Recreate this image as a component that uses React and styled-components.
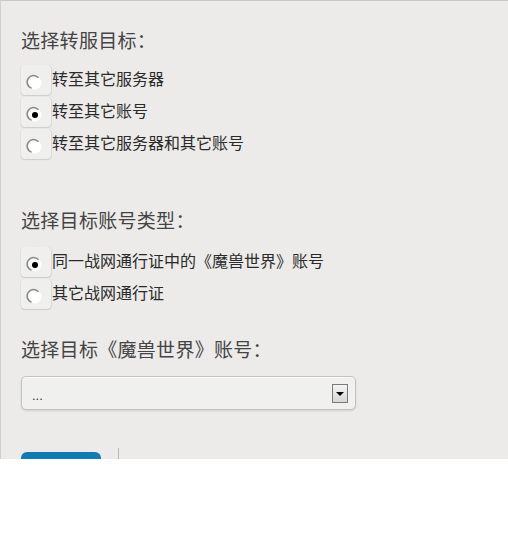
import React from "react";
import styled, { createGlobalStyle } from "styled-components";

const Global = createGlobalStyle`
  html, body { margin: 0; padding: 0; background: #ffffff; }
  body { font-family: "Noto Sans CJK SC", "Noto Sans", sans-serif; }
`;

const Panel = styled.div`
  box-sizing: border-box;
  height: 459px;
  overflow: hidden;
  background: #ecebe9;
  border-top: 1px solid #c9c9c7;
  border-left: 1px solid #cfcfcd;
  padding: 27px 0 0 20px;
`;

const Heading = styled.div`
  font-size: 19px;
  line-height: 24px;
  color: #444444;
  margin-top: ${(p) => p.$top || 0}px;
  letter-spacing: 0.3px;
`;

const Group = styled.div`
  display: flex;
  flex-direction: column;
  margin-top: ${(p) => p.$top || 0}px;
`;

const Row = styled.label`
  display: flex;
  align-items: flex-start;
  height: 32px;
`;

const RadioBox = styled.span`
  box-sizing: border-box;
  width: 30px;
  height: 30px;
  border-radius: 4px;
  background: #efefed;
  box-shadow: 0 1px 1px rgba(0, 0, 0, 0.13), 1px 0 1px rgba(0, 0, 0, 0.07),
    -1px 0 0 rgba(0, 0, 0, 0.03);
  display: flex;
  flex-shrink: 0;
`;

const Label = styled.span`
  font-size: 16px;
  line-height: 26px;
  color: #2a2a2a;
  margin-left: 1px;
`;

const Radio = ({ checked }) => (
  <RadioBox>
    <svg width="30" height="30" viewBox="0 0 30 30">
      <circle cx="14" cy="18" r="6.5" fill="#ffffff" />
      <path d="M17.5 12.8 A6.5 6.5 0 1 0 10.5 23.2" fill="none" stroke="#8a8a8a" strokeWidth="1.6" />
      {checked && <circle cx="14" cy="18" r="3" fill="#000" />}
    </svg>
  </RadioBox>
);

const Select = styled.div`
  box-sizing: border-box;
  margin-top: 15px;
  width: 335px;
  height: 34px;
  border: 1px solid #c2c2c0;
  border-radius: 5px;
  background: #f0f0ef;
  box-shadow: 0 1px 2px rgba(0, 0, 0, 0.12), inset 0 1px 0 #fafafa;
  display: flex;
  align-items: center;
  justify-content: space-between;
  padding: 0 7px 0 10px;
`;

const SelectText = styled.span`
  font-family: "Liberation Sans", sans-serif;
  font-size: 13px;
  color: #333;
  margin-top: 4px;
`;

const Arrow = styled.span`
  box-sizing: border-box;
  width: 16px;
  height: 19px;
  border: 1px solid #7a7a7a;
  background: linear-gradient(#f4f4f4, #d6d6d6);
  display: flex;
  align-items: center;
  justify-content: center;
  margin-top: 1px;
`;

const Triangle = styled.span`
  width: 0;
  height: 0;
  border-left: 4px solid transparent;
  border-right: 4px solid transparent;
  border-top: 4px solid #000;
`;

const Actions = styled.div`
  display: flex;
  align-items: flex-start;
  margin-top: 42px;
`;

const Button = styled.div`
  width: 80px;
  height: 30px;
  border-radius: 6px;
  background: #127bb3;
`;

const Divider = styled.div`
  width: 1px;
  height: 30px;
  background: #b9b9b7;
  margin-left: 17px;
  margin-top: -4px;
`;

export default function App() {
  return (
    <>
      <Global />
      <Panel>
        <Heading>选择转服目标：</Heading>
        <Group $top={13}>
          <Row><Radio /><Label>转至其它服务器</Label></Row>
          <Row><Radio checked /><Label>转至其它账号</Label></Row>
          <Row><Radio /><Label>转至其它服务器和其它账号</Label></Row>
        </Group>
        <Heading $top={47}>选择目标账号类型：</Heading>
        <Group $top={15}>
          <Row><Radio checked /><Label>同一战网通行证中的《魔兽世界》账号</Label></Row>
          <Row><Radio /><Label>其它战网通行证</Label></Row>
        </Group>
        <Heading $top={26}>选择目标《魔兽世界》账号：</Heading>
        <Select>
          <SelectText>...</SelectText>
          <Arrow><Triangle /></Arrow>
        </Select>
        <Actions>
          <Button />
          <Divider />
        </Actions>
      </Panel>
    </>
  );
}
